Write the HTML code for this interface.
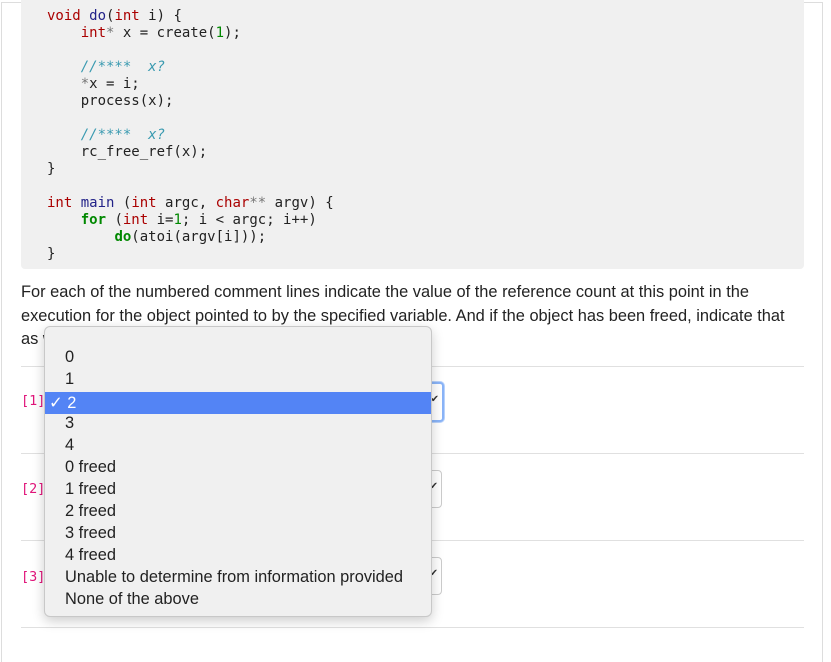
<!DOCTYPE html>
<html><head><style>
html,body{margin:0;width:831px;height:662px;overflow:hidden;}
body{background:#fff;position:relative;font-family:"Liberation Sans",sans-serif;}
.frame{position:absolute;left:1px;top:2px;width:822px;height:660px;border:1px solid #ddd;border-bottom:none;box-sizing:border-box;}
.code{position:absolute;left:21px;top:0;width:783px;height:269px;background:#f0f0f0;border-radius:0 0 4px 4px;}
pre{margin:0;position:absolute;left:47px;top:8px;font-family:"DejaVu Sans Mono",monospace;font-size:14px;line-height:17px;color:#222;}
.k{color:#a00;}.f{color:#228;}.n{color:#080;}.c{color:#3a9ab0;font-style:italic;}.b{color:#080;font-weight:bold;}.g{color:#777;}
.p{position:absolute;left:21px;top:281px;width:775px;font-size:16.4px;line-height:23.5px;color:#222;}
.hr{position:absolute;left:21px;width:783px;height:1px;background:#e0e0e0;}
.lab{position:absolute;left:21px;font-family:"DejaVu Sans Mono",monospace;font-size:13.5px;color:#e0157a;}
.sel{position:absolute;left:400px;width:40px;height:36px;border:1px solid #ccc;border-radius:4px;background:#fff;}
.sel span{position:absolute;right:3px;top:10px;font-size:10px;color:#333;}
.dd{position:absolute;left:44px;top:326px;width:386px;height:289px;background:#f0f0f0;border:1px solid #c8c8c8;border-radius:6px;box-shadow:0 4px 12px rgba(0,0,0,.2);}
.it{position:absolute;left:20px;font-size:16.4px;color:#222;line-height:22px;}
.hl{position:absolute;left:0;top:65px;width:386px;height:22px;background:#5384f5;}
</style></head><body>
<div class="frame"></div>
<div class="code"></div>
<pre><span class="k">void</span> <span class="f">do</span>(<span class="k">int</span> i) {
    <span class="k">int</span><span class="g">*</span> x = create(<span class="n">1</span>);

    <span class="c">//****  x?</span>
    <span class="g">*</span>x = i;
    process(x);

    <span class="c">//****  x?</span>
    rc_free_ref(x);
}

<span class="k">int</span> <span class="f">main</span> (<span class="k">int</span> argc, <span class="k">char</span><span class="g">**</span> argv) {
    <span class="b">for</span> (<span class="k">int</span> i=<span class="n">1</span>; i &lt; argc; i++)
        <span class="b">do</span>(atoi(argv[i]));
}</pre>
<div class="p">For each of the numbered comment lines indicate the value of the reference count at this point in the execution for the object pointed to by the specified variable. And if the object has been freed, indicate that as well.</div>
<div class="hr" style="top:366px"></div>
<div class="hr" style="top:453px"></div>
<div class="hr" style="top:540px"></div>
<div class="hr" style="top:627px"></div>
<div class="lab" style="top:393px">[1]</div>
<div class="lab" style="top:481px">[2]</div>
<div class="lab" style="top:569px">[3]</div>
<div class="sel" style="top:382px;border:2px solid #8ab4f8;box-shadow:0 0 0 1px #b8d2fb;"><span>✔</span></div>
<div class="sel" style="top:470px"><span>✔</span></div>
<div class="sel" style="top:557px"><span>✔</span></div>
<div class="dd">
<div class="hl"></div>
<div class="it" style="top:19px">0</div>
<div class="it" style="top:41px">1</div>
<div class="it" style="top:65px;color:#fff;left:4px">✓ 2</div>
<div class="it" style="top:85px">3</div>
<div class="it" style="top:107px">4</div>
<div class="it" style="top:129px">0 freed</div>
<div class="it" style="top:151px">1 freed</div>
<div class="it" style="top:173px">2 freed</div>
<div class="it" style="top:195px">3 freed</div>
<div class="it" style="top:217px">4 freed</div>
<div class="it" style="top:239px">Unable to determine from information provided</div>
<div class="it" style="top:261px">None of the above</div>
</div>
</body></html>
